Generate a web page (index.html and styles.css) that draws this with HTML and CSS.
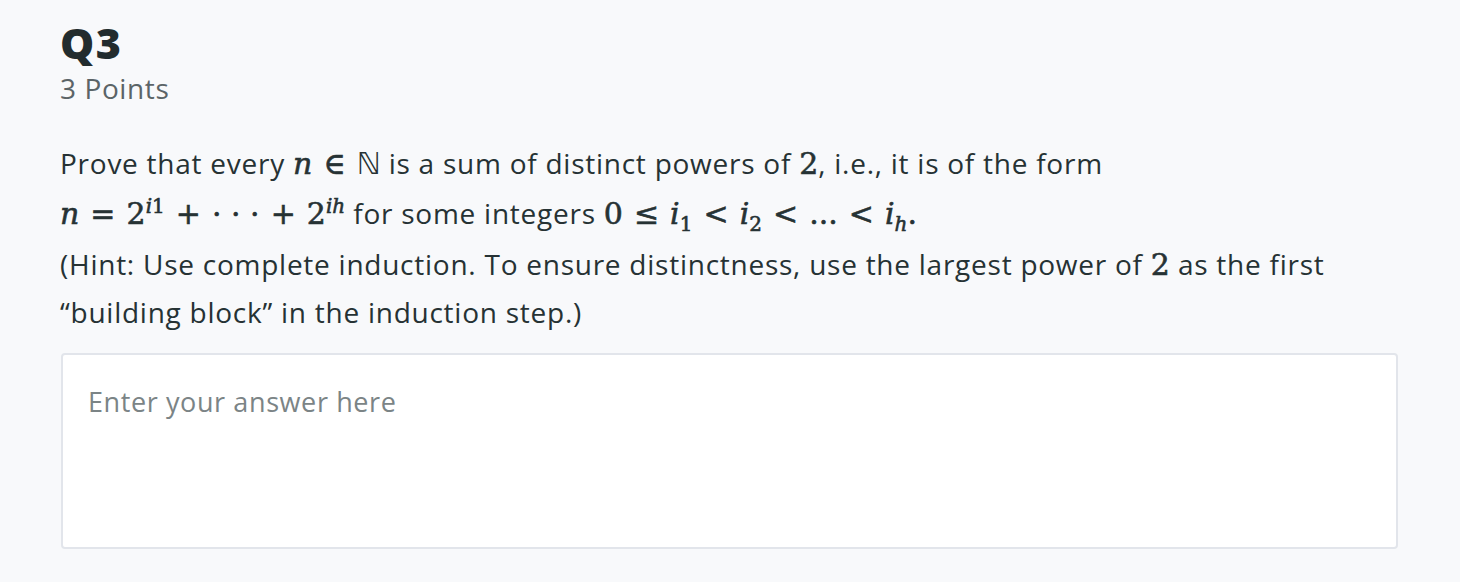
FILE: index.html
```html
<!DOCTYPE html>
<html>
<head>
<meta charset="utf-8">
<link rel="stylesheet" href="styles.css">
</head>
<body>
<div class="question">
  <div class="q-head">
    <h1 class="q-title">Q3</h1>
    <div class="q-points">3 Points</div>
  </div>
  <div class="q-body">
    <p class="line">Prove that every <span class="m mi">n</span> <span class="m rel">∈</span> <span class="m bb">ℕ</span> is a sum of distinct powers of <span class="m">2</span>, i.e., it is of the form</p>
    <p class="line line-math"><span class="m mi">n</span> <span class="m rel">=</span> <span class="m">2<sup><span class="mi">i</span>1</sup></span> <span class="m rel">+</span> <span class="m">· · ·</span> <span class="m rel">+</span> <span class="m">2<sup><span class="mi">i</span><span class="mi">h</span></sup></span> for some integers <span class="m">0</span> <span class="m rel">≤</span> <span class="m"><span class="mi">i</span><sub>1</sub></span> <span class="m rel">&lt;</span> <span class="m"><span class="mi">i</span><sub>2</sub></span> <span class="m rel">&lt;</span> <span class="m">...</span> <span class="m rel">&lt;</span> <span class="m"><span class="mi">i</span><sub class="mi">h</sub>.</span></p>
    <p class="line line-hint">(Hint: Use complete induction. To ensure distinctness, use the largest power of <span class="m">2</span> as the first</p>
    <p class="line line-hint">“building block” in the induction step.)</p>
  </div>
  <div class="answer">
    <div class="placeholder">Enter your answer here</div>
  </div>
</div>
</body>
</html>
```
FILE: styles.css
```css
html, body {
  margin: 0;
  padding: 0;
  background: #f8f9fb;
}
body {
  font-family: "Open Sans", Lato, sans-serif;
  color: #263234;
}
.question {
  padding: 17px 62px 0 60px;
}
.q-title {
  margin: 0;
  font-size: 43px;
  font-weight: 800;
  line-height: 52px;
  letter-spacing: 1.5px;
  color: #222c2e;
}
.q-points {
  font-size: 28px;
  line-height: 38px;
  letter-spacing: 0.6px;
  color: #5b6467;
}
.q-body {
  margin-top: 31px;
  font-size: 28px;
  letter-spacing: 0.75px;
}
.line {
  margin: 0;
  line-height: 50px;
  height: 50px;
  white-space: nowrap;
}
.line-math {
  line-height: 50px;
  height: 52px;
}
.line-hint {
  line-height: 48px;
  height: 48px;
}
.m {
  font-family: "DejaVu Serif", "Liberation Serif", serif;
  font-size: 30px;
  line-height: 1;
  font-weight: 400;
  letter-spacing: 0;
  -webkit-text-stroke: 0.6px currentColor;
}
.rel {
  margin: 0 3px;
}
.bb {
  font-family: "DejaVu Sans", sans-serif;
  -webkit-text-stroke: 0;
}
.mi {
  font-style: italic;
}
.m sup, .m sub {
  font-size: 20px;
  line-height: 0;
}
.answer {
  margin-top: 17px;
  margin-left: 1px;
  background: #fff;
  border: 2px solid #e2e5eb;
  border-radius: 4px;
  box-sizing: border-box;
  height: 196px;
  padding: 28px 25px;
}
.placeholder {
  font-size: 27px;
  letter-spacing: 0.6px;
  color: #7b8486;
}
```
